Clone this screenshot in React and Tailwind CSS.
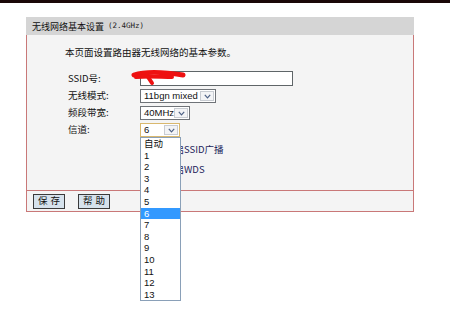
import React from 'react';

const cjk = '"Noto Sans CJK SC", "Liberation Sans", sans-serif';
const latin = '"Liberation Sans", Arial, sans-serif';

const channels = ['自动', '1', '2', '3', '4', '5', '6', '7', '8', '9', '10', '11', '12', '13'];

const Arrow = () => (
  <span className="flex h-full w-[14px] items-center justify-center border border-[#c8ccd2] bg-[#f3f4f6]">
    <svg width="7" height="5" viewBox="0 0 7 5">
      <path d="M0.8 0.8 L3.5 3.8 L6.2 0.8" fill="none" stroke="#4d6185" strokeWidth="1.2" />
    </svg>
  </span>
);

const Select = ({ value, width, focused }) => (
  <div
    className={`flex h-[14px] items-center justify-between border bg-white p-px ${
      focused ? 'border-[#d9b86e]' : 'border-[#6f7378]'
    }`}
    style={{ width }}
  >
    <span className="pl-[2px] text-[9.5px] leading-none text-[#111]" style={{ fontFamily: latin }}>
      {value}
    </span>
    <Arrow />
  </div>
);

const Row = ({ label, children }) => (
  <div className="flex items-center">
    <span className="w-[72px] text-[9.5px] leading-none text-[#111]" style={{ fontFamily: cjk }}>
      {label}
    </span>
    {children}
  </div>
);

const Check = ({ label }) => (
  <div className="flex h-[14px] items-center pl-[81px]">
    <span className="mr-[5px] h-[11px] w-[11px] border border-[#6f7378] bg-white" />
    <span className="text-[9.5px] leading-none text-[#1c1c5a]" style={{ fontFamily: cjk }}>
      {label}
    </span>
  </div>
);

const Button = ({ children }) => (
  <span
    className="flex h-[15px] w-[32px] items-center justify-center gap-[3px] border border-[#3a3a3a] bg-[#d6e2ec] text-[9.5px] leading-none text-[#111]"
    style={{ fontFamily: cjk }}
  >
    {children}
  </span>
);

export default function App() {
  return (
    <div className="relative h-[335px] w-[450px] overflow-hidden bg-white" style={{ fontFamily: cjk }}>
      <div className="h-[3px] bg-[#1a0707]" />

      <div className="ml-[26px] mt-[14px] w-[388px]">
        <div className="flex h-[18px] items-center gap-[4px] bg-[#d5d5d5] pl-[6px]">
          <span className="text-[9px] leading-none text-[#111]">无线网络基本设置</span>
          <span className="text-[7.5px] leading-none text-[#222]" style={{ fontFamily: '"DejaVu Sans Mono", monospace' }}>
            (2.4GHz)
          </span>
        </div>

        <div className="h-[155px] border-x border-[#c97878] bg-[#f4f4f4] pl-[41px] pt-[12px]">
          <p className="-ml-[3px] text-[9.5px] leading-[10px] text-[#111]">本页面设置路由器无线网络的基本参数。</p>

          <div className="mt-[14px] flex flex-col gap-[3px]">
            <Row label="SSID号:">
              <div className="h-[15px] w-[153px] border border-[#5f6568] bg-white" />
            </Row>
            <Row label="无线模式:">
              <Select value="11bgn mixed" width={76} />
            </Row>
            <Row label="频段带宽:">
              <Select value="40MHz" width={50} />
            </Row>
            <Row label="信道:">
              <Select value="6" width={40} focused />
            </Row>
          </div>

          <div className="mt-[6px] flex flex-col gap-[6px]">
            <Check label="开启SSID广播" />
            <Check label="开启WDS" />
          </div>
        </div>

        <div className="flex h-[22px] items-center gap-[13px] border border-[#c97878] bg-[#f4f4f4] pl-[6px]">
          <Button>
            <span>保</span>
            <span>存</span>
          </Button>
          <Button>
            <span>帮</span>
            <span>助</span>
          </Button>
        </div>
      </div>

      <svg className="absolute left-[128px] top-[68px]" width="60" height="20" viewBox="0 0 60 20">
        <path d="M6 7 C 18 3, 36 4, 55 7" fill="none" stroke="#ee1111" strokeWidth="5" strokeLinecap="round" />
        <path d="M8 9 C 20 8, 34 9, 44 9" fill="none" stroke="#ee1111" strokeWidth="4" strokeLinecap="round" />
        <path d="M20 9 L 24 15" fill="none" stroke="#ee1111" strokeWidth="4" strokeLinecap="round" />
      </svg>

      <div className="absolute left-[140px] top-[137px] flex w-[41px] flex-col border border-[#8aa0b8] bg-white">
        {channels.map((c) => (
          <div
            key={c}
            className={`flex h-[11.6px] items-center pl-[3px] text-[9.5px] leading-none ${
              c === '6' ? 'bg-[#3399ff] text-white' : 'text-[#111]'
            }`}
            style={{ fontFamily: c === '自动' ? cjk : latin }}
          >
            {c}
          </div>
        ))}
      </div>
    </div>
  );
}
